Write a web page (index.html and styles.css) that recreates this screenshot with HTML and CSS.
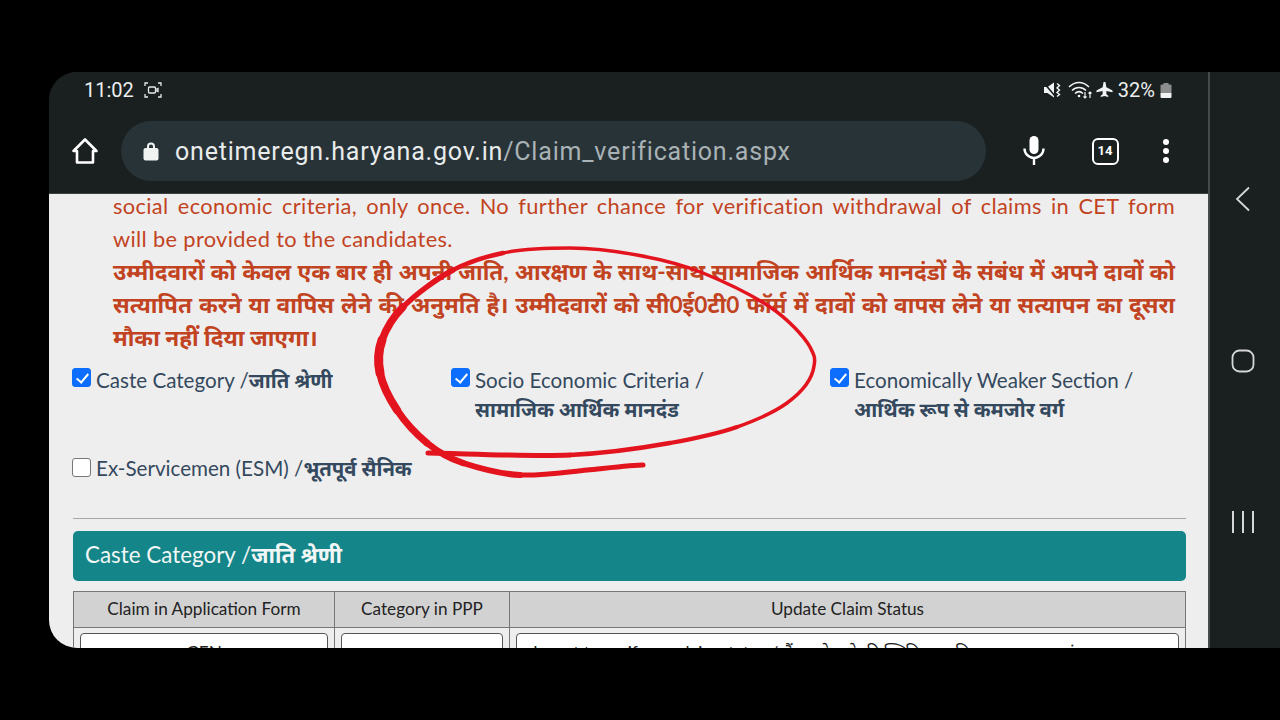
FILE: index.html
```html
<!DOCTYPE html>
<html lang="en">
<head>
<meta charset="utf-8">
<title>Claim verification</title>
<link rel="stylesheet" href="styles.css">
</head>
<body>
<div class="phone">
  <div class="screen">
    <header class="chrome">
      <div class="status">
        <div class="status-left">
          <span class="clock">11:02</span>
          <svg class="rec" viewBox="0 0 18 16" width="18" height="16" fill="none" stroke="#e8eaea" stroke-width="1.3"><path d="M1 4V1h3M14 1h3v3M17 12v3h-3M4 15H1v-3"/><rect x="4.5" y="5" width="7" height="6" rx="1"/><path d="M11.5 7.5l2.5-1v3l-2.500-1"/></svg>
        </div>
        <div class="status-right">
          <svg class="mute" viewBox="0 0 17 16" width="17" height="16"><path d="M0 5h3.500L10 .5v15L3.500 11H0z" fill="#f2f4f4"/><path d="M0 1l11 13" stroke="#1a1f20" stroke-width="1.600"/><path d="M13 1.500l2.500 2-2.500 2.500 2.500 2-2.500 2.500 2.500 2-2.500 2" fill="none" stroke="#f2f4f4" stroke-width="1.400"/></svg>
          <svg class="wifi" viewBox="0 0 26 18" width="26" height="18" fill="none" stroke="#f2f4f4" stroke-width="1.500"><path d="M1 6c6-6 14-6 20 0M4 9.500c4-4 10-4 14 0M7 12.500c2.500-2.500 5.500-2.500 8 0"/><circle cx="11" cy="15" r="1.300" fill="#f2f4f4" stroke="none"/><path d="M17 11v6M15.500 15.500l1.500 1.500 1.500-1.500M22 17v-6M20.500 12.500l1.500-1.500 1.500 1.500" stroke-width="1.200"/></svg>
          <svg class="plane" viewBox="0 0 18 18" width="17" height="17" fill="#f2f4f4"><path d="M8 1h2l1 5.500 6.500 3.500v2L11 10.500V14l2 1.500V17l-4-1-4 1v-1.500L7 14v-3.500L.5 12v-2L7 6.500z"/></svg>
          <span class="battery-text">32%</span>
          <svg viewBox="0 0 12 18" width="12" height="18"><path d="M.5 4.500a1 1 0 0 1 1-1h2V2h5v1.500h2a1 1 0 0 1 1 1V12H.5z" fill="#8d8f8f"/><path d="M.5 12h11v4a1 1 0 0 1-1 1h-9a1 1 0 0 1-1-1z" fill="#f2f4f4"/></svg>
        </div>
      </div>
      <div class="toolbar">
        <svg class="home" viewBox="0 0 28 28" width="28" height="28" fill="none" stroke="#fff" stroke-width="2.600" stroke-linejoin="round"><path d="M2.500 14L14 2.500 25.500 14H22v11.500H6V14z"/></svg>
        <div class="omnibox">
          <svg viewBox="0 0 18 22" width="18" height="22" fill="#f1f3f3"><path d="M5 9V6.500a4 4 0 0 1 8 0V9h-2V6.500a2 2 0 0 0-4 0V9z"/><rect x="1.500" y="8" width="15" height="12.500" rx="2"/></svg>
          <span class="url">onetimeregn.haryana.gov.in<span class="url-path">/Claim_verification.aspx</span></span>
        </div>
        <div class="actions">
          <svg viewBox="0 0 24 32" width="24" height="32" fill="none" stroke="#fff"><rect x="7.500" y="1" width="9" height="18" rx="4.500" fill="#fff" stroke="none"/><path d="M2.500 13.500a9.500 9.500 0 0 0 19 0M12 23v7" stroke-width="2.400"/></svg>
          <div class="tabs">14</div>
          <svg viewBox="0 0 8 26" width="8" height="26" fill="#fff"><circle cx="4" cy="4" r="3"/><circle cx="4" cy="13" r="3"/><circle cx="4" cy="22" r="3"/></svg>
        </div>
      </div>
    </header>
    <main class="page">
      <div class="notice">
        <p class="english"><span class="first-line">social economic criteria, only once. No further chance for verification withdrawal of claims in CET form</span> will be provided to the candidates.</p>
        <p class="justify hindi">उम्मीदवारों को केवल एक बार ही अपनी जाति, आरक्षण के साथ-साथ सामाजिक आर्थिक मानदंडों के संबंध में अपने दावों को सत्यापित करने या वापिस लेने की अनुमति है। उम्मीदवारों को सी0ई0टी0 फॉर्म में दावों को वापस लेने या सत्यापन का दूसरा मौका नहीं दिया जाएगा।</p>
      </div>
      <div class="options">
        <label class="option"><span class="box on"></span><span>Caste Category /<b>जाति श्रेणी</b></span></label>
        <label class="option"><span class="box on"></span><span>Socio Economic Criteria /<br><b>सामाजिक आर्थिक मानदंड</b></span></label>
        <label class="option"><span class="box on"></span><span>Economically Weaker Section /<br><b>आर्थिक रूप से कमजोर वर्ग</b></span></label>
        <label class="option"><span class="box off"></span><span>Ex-Servicemen (ESM) /<b>भूतपूर्व सैनिक</b></span></label>
      </div>
      <hr class="rule">
      <h2 class="band">Caste Category /<b>जाति श्रेणी</b></h2>
      <table class="claims">
        <tr><th class="c1">Claim in Application Form</th><th class="c2">Category in PPP</th><th>Update Claim Status</th></tr>
        <tr>
          <td><div class="field center">GEN</div></td>
          <td><div class="field center">&nbsp;</div></td>
          <td><div class="field">I want to verify my claim status / मैं अपने दावे की स्थिति सत्यापित करना चाहता हूं</div></td>
        </tr>
      </table>
      <svg class="scribble" viewBox="0 0 1159 454" width="1159" height="454" fill="none" stroke="#e3141e" stroke-linecap="round" stroke-linejoin="round">
        <path stroke-width="5" d="M379 259C403 259 481 263 521 261"/>
        <path stroke-width="4.500" d="M521 261C561 259 593 254 621 249"/>
        <path stroke-width="4" d="M621 249C649 244 668 240 688 233"/>
        <path stroke-width="3.500" d="M688 233C707.500 226 725 218.500 738 209C751 199.500 763 187 765 172C767 163 764 159 761 153C755 142.500 739 125 721 113C703 101 676 88 654 79C632 70 610 65 588 61C566 57 543 54 521 54C499 54 473 55 454 59"/>
        <path stroke-width="4.500" d="M454 59C434.500 63 421 67 404 76"/>
        <path stroke-width="5.500" d="M404 76C387 85 366 101 354 113"/>
        <path stroke-width="7.500" d="M354 113C342 125 337 135 333 146"/>
        <path stroke-width="9" d="M333 146C329 157 328.500 167 331 179"/>
        <path stroke-width="8" d="M331 179C333.500 191 340 204 348 216"/>
        <path stroke-width="7" d="M348 216C356 228 367 240 378 249"/>
        <path stroke-width="6.500" d="M378 249C389 258 398.500 264 414 269"/>
        <path stroke-width="6" d="M414 269C429.500 274 450 280 471 281"/>
        <path stroke-width="5" d="M471 281C492 282 517.500 278 538 276C558.500 274 585 271 594 271"/>
      </svg>
    </main>
  </div>
  <nav class="softkeys">
    <svg viewBox="0 0 16 26" width="16" height="26" fill="none" stroke="#d5d7d7" stroke-width="1.800"><path d="M14 1.500L2 13l12 11.500"/></svg>
    <svg viewBox="0 0 24 24" width="24" height="24" fill="none" stroke="#d5d7d7" stroke-width="1.800"><rect x="1.500" y="1.500" width="21" height="21" rx="7"/></svg>
    <svg viewBox="0 0 24 24" width="24" height="24" fill="none" stroke="#d5d7d7" stroke-width="2"><path d="M2 1v22M12 1v22M22 1v22"/></svg>
  </nav>
</div>
</body>
</html>
```

FILE: styles.css
```css
* { box-sizing: border-box; }
html, body { margin: 0; height: 100%; background: #000; overflow: hidden; }
body { padding: 72px 0 72px 49px; font-family: "Lato", "Noto Sans", "Noto Sans Devanagari", sans-serif; }
.phone { display: flex; height: 576px; background: #1a1f20; border-radius: 28px 0 0 28px; overflow: hidden; }
.screen { width: 1161px; flex: none; display: flex; flex-direction: column; border-right: 2px solid #444a4c; }
.chrome { height: 122px; flex: none; background: #1a1f20; border-bottom: 1px solid #3c4244; position: relative; z-index: 2; color: #fff; }
.status { height: 49px; display: flex; justify-content: space-between; align-items: center; padding: 0 36px 14px 35px; }
.status-left, .status-right { display: flex; align-items: center; }
.clock { font: 20px "Roboto", sans-serif; color: #eceeee; margin-right: 10px; }
.status-right { gap: 3px; }
.wifi { margin-left: 4px; margin-right: -1px; }
.plane { margin-right: 2px; }
.battery-text { font: 20px "Roboto", sans-serif; color: #eceeee; margin-right: 2px; }
.toolbar { display: flex; align-items: center; height: 60px; padding: 0 38px 0 22px; }
.home { margin-right: 22px; }
.omnibox { width: 865px; height: 60px; border-radius: 30px; background: #283337; display: flex; align-items: center; gap: 15px; padding-left: 21px; flex: none; }
.url { font: 25px "Roboto", sans-serif; color: #e9ecec; letter-spacing: .8px; padding-top: 1px; }
.url-path { color: #a9b2b5; }
.actions { flex: 1; display: flex; align-items: center; justify-content: space-between; padding-left: 36px; }
.tabs { width: 27px; height: 27px; margin-left: 2px; border: 2.500px solid #fff; border-radius: 6px; font: 700 13px/22px "Roboto", sans-serif; text-align: center; color: #fff; }
.page { flex: 1; background: #eeeeee; position: relative; overflow: hidden; padding: 0 22px 0 24px; }
.notice { margin: -5px 11px 0 40px; color: #c2431f; line-height: 33px; }
.notice p { margin: 0; }
.justify { text-align: justify; }
.first-line { display: block; text-align: justify; text-align-last: justify; }
.english { font-size: 21.800px; letter-spacing: .35px; }
.hindi { font-size: 22.600px; font-weight: 700; }
.options { display: grid; grid-template-columns: repeat(3, 379px); grid-template-rows: 88px 64px; margin: 12px 0 0 -1px; color: #34495e; font-size: 20.600px; line-height: 29px; }
.options b { font-size: 20.300px; }
.option { display: flex; gap: 5px; align-items: flex-start; }
.box { flex: none; width: 19px; height: 19px; margin-top: 2px; border: 1px solid #777; border-radius: 3px; background: #fff; }
.box.off { margin-top: 4px; }
.box.on { background: #0d6efd; border-color: #0d6efd; position: relative; }
.box.on::after { content: ""; position: absolute; left: 5.500px; top: 2px; width: 5px; height: 10px; border: solid #fff; border-width: 0 2.500px 2.500px 0; transform: rotate(40deg); }
.rule { margin: 0; border: 0; border-top: 1px solid #a5a6a6; }
.band { margin: 12px 0 10px; height: 50px; background: #148588; border-radius: 5px; color: #f1f6f6; font-size: 22.400px; font-weight: 400; line-height: 48px; padding-left: 12px; }
.band b { font-size: 22px; }
.claims { width: 1113px; border-collapse: collapse; table-layout: fixed; font-size: 17.200px; color: #222; }
.claims th { height: 36px; background: #d2d2d2; border: 1px solid #777; font-weight: 400; padding: 0 0 2px; }
.claims td { border: 1px solid #777; padding: 5px 6px; }
.c1 { width: 261px; }
.c2 { width: 175px; }
.field { height: 40px; border: 1px solid #555; border-radius: 4px; background: #fff; line-height: 38px; padding-left: 16px; white-space: nowrap; overflow: hidden; }
.center { text-align: center; padding-left: 0; }
.scribble { position: absolute; left: 0; top: 0; pointer-events: none; }
.softkeys { flex: 1; display: flex; flex-direction: column; justify-content: space-between; align-items: center; padding: 114px 4px 114px 0; }
```
